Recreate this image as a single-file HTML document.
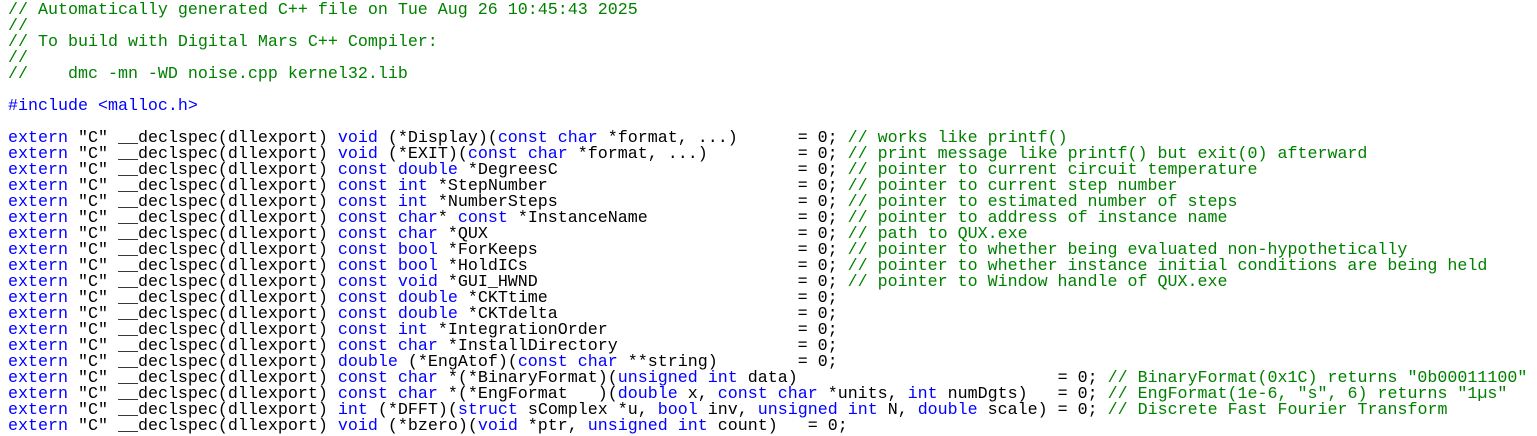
<!DOCTYPE html>
<html><head><meta charset="utf-8"><style>
html,body{margin:0;padding:0;background:#fff;width:1537px;height:436px;overflow:hidden}
pre{margin:0;padding:3px 0 0 8px;font-family:"Liberation Mono","Courier New",monospace;font-size:16.67px;line-height:16px;color:#000}
.k{color:#0000ff}.c{color:#008000}
</style></head><body><pre><span class="c">// Automatically generated C++ file on Tue Aug 26 10:45:43 2025
//
// To build with Digital Mars C++ Compiler:
//
//    dmc -mn -WD noise.cpp kernel32.lib</span>

<span class="k">#include &lt;malloc.h&gt;</span>

<span class="k">extern</span> "C" __declspec(dllexport) <span class="k">void</span> (*Display)(<span class="k">const</span> <span class="k">char</span> *format, ...)      = 0; <span class="c">// works like printf()</span>
<span class="k">extern</span> "C" __declspec(dllexport) <span class="k">void</span> (*EXIT)(<span class="k">const</span> <span class="k">char</span> *format, ...)         = 0; <span class="c">// print message like printf() but exit(0) afterward</span>
<span class="k">extern</span> "C" __declspec(dllexport) <span class="k">const</span> <span class="k">double</span> *DegreesC                        = 0; <span class="c">// pointer to current circuit temperature</span>
<span class="k">extern</span> "C" __declspec(dllexport) <span class="k">const</span> <span class="k">int</span> *StepNumber                         = 0; <span class="c">// pointer to current step number</span>
<span class="k">extern</span> "C" __declspec(dllexport) <span class="k">const</span> <span class="k">int</span> *NumberSteps                        = 0; <span class="c">// pointer to estimated number of steps</span>
<span class="k">extern</span> "C" __declspec(dllexport) <span class="k">const</span> <span class="k">char</span>* <span class="k">const</span> *InstanceName               = 0; <span class="c">// pointer to address of instance name</span>
<span class="k">extern</span> "C" __declspec(dllexport) <span class="k">const</span> <span class="k">char</span> *QUX                               = 0; <span class="c">// path to QUX.exe</span>
<span class="k">extern</span> "C" __declspec(dllexport) <span class="k">const</span> <span class="k">bool</span> *ForKeeps                          = 0; <span class="c">// pointer to whether being evaluated non-hypothetically</span>
<span class="k">extern</span> "C" __declspec(dllexport) <span class="k">const</span> <span class="k">bool</span> *HoldICs                           = 0; <span class="c">// pointer to whether instance initial conditions are being held</span>
<span class="k">extern</span> "C" __declspec(dllexport) <span class="k">const</span> <span class="k">void</span> *GUI_HWND                          = 0; <span class="c">// pointer to Window handle of QUX.exe</span>
<span class="k">extern</span> "C" __declspec(dllexport) <span class="k">const</span> <span class="k">double</span> *CKTtime                         = 0;
<span class="k">extern</span> "C" __declspec(dllexport) <span class="k">const</span> <span class="k">double</span> *CKTdelta                        = 0;
<span class="k">extern</span> "C" __declspec(dllexport) <span class="k">const</span> <span class="k">int</span> *IntegrationOrder                   = 0;
<span class="k">extern</span> "C" __declspec(dllexport) <span class="k">const</span> <span class="k">char</span> *InstallDirectory                  = 0;
<span class="k">extern</span> "C" __declspec(dllexport) <span class="k">double</span> (*EngAtof)(<span class="k">const</span> <span class="k">char</span> **string)        = 0;
<span class="k">extern</span> "C" __declspec(dllexport) <span class="k">const</span> <span class="k">char</span> *(*BinaryFormat)(<span class="k">unsigned</span> <span class="k">int</span> data)                          = 0; <span class="c">// BinaryFormat(0x1C) returns "0b00011100"</span>
<span class="k">extern</span> "C" __declspec(dllexport) <span class="k">const</span> <span class="k">char</span> *(*EngFormat   )(<span class="k">double</span> x, <span class="k">const</span> <span class="k">char</span> *units, <span class="k">int</span> numDgts)   = 0; <span class="c">// EngFormat(1e-6, "s", 6) returns "1µs"</span>
<span class="k">extern</span> "C" __declspec(dllexport) <span class="k">int</span> (*DFFT)(<span class="k">struct</span> sComplex *u, <span class="k">bool</span> inv, <span class="k">unsigned</span> <span class="k">int</span> N, <span class="k">double</span> scale) = 0; <span class="c">// Discrete Fast Fourier Transform</span>
<span class="k">extern</span> "C" __declspec(dllexport) <span class="k">void</span> (*bzero)(<span class="k">void</span> *ptr, <span class="k">unsigned</span> <span class="k">int</span> count)   = 0;
</pre></body></html>
